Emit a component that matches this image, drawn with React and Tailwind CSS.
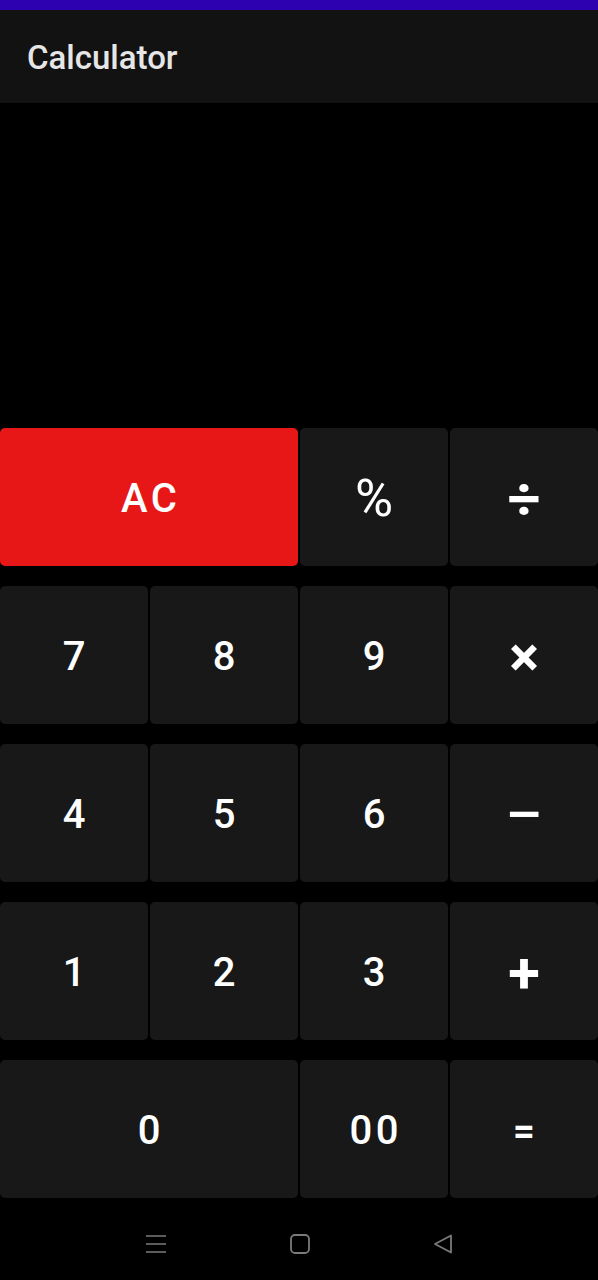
const rows = [
  [
    { label: 'AC', span: 2, red: true },
    { label: '%', size: 'text-[52px]' },
    { label: '÷', size: 'text-[58px] font-bold' },
  ],
  [{ label: '7' }, { label: '8' }, { label: '9' }, { label: '×', size: 'text-[56px] font-bold' }],
  [{ label: '4' }, { label: '5' }, { label: '6' }, { label: '−', size: 'text-[70px] font-normal' }],
  [{ label: '1' }, { label: '2' }, { label: '3' }, { label: '+', size: 'text-[58px] font-bold' }],
  [{ label: '0', span: 2 }, { label: '00' }, { label: '=', size: 'text-[38px] font-bold' }],
];

function Key({ label, span, red, size }) {
  return (
    <button
      className={
        'h-[138px] rounded-[5px] flex items-center justify-center pt-[4px] text-white leading-none ' +
        (size ? size + ' ' : 'text-[40px] font-medium tracking-[0.09em] pl-[0.09em] ') +
        (span === 2 ? 'col-span-2 ' : '') +
        (red ? 'bg-[#e81717]' : 'bg-[#181818]')
      }
    >
      {label}
    </button>
  );
}

export default function App() {
  return (
    <div className="w-[598px] h-[1280px] bg-black flex flex-col font-['Roboto',sans-serif] overflow-hidden">
      {/* status bar */}
      <div className="h-[10px] bg-[#2d00b0]" />

      {/* toolbar */}
      <div className="h-[93px] bg-[#121212] flex items-center px-[27px] pt-[3px]">
        <span className="text-[33px] font-medium text-[#e6e6e6]">Calculator</span>
      </div>

      {/* display */}
      <div className="h-[325px]" />

      {/* keypad */}
      <div className="flex flex-col gap-[20px]">
        {rows.map((row, i) => (
          <div key={i} className="grid grid-cols-4 gap-x-[2px]">
            {row.map((k) => (
              <Key key={k.label} {...k} />
            ))}
          </div>
        ))}
      </div>

      {/* navigation bar */}
      <div className="flex-1 flex items-center justify-center gap-[123px] text-[#7a7a7a] pt-[10px]">
        <svg width="22" height="20" viewBox="0 0 22 20" fill="none" stroke="currentColor" strokeWidth="1.6">
          <path d="M1 2h20M1 10h20M1 18h20" />
        </svg>
        <svg width="20" height="20" viewBox="0 0 20 20" fill="none" stroke="currentColor" strokeWidth="1.8">
          <rect x="1" y="1" width="18" height="18" rx="4" />
        </svg>
        <svg width="20" height="20" viewBox="0 0 20 20" fill="none" stroke="currentColor" strokeWidth="1.8" strokeLinejoin="round">
          <path d="M18 1.5v17L2 10z" />
        </svg>
      </div>
    </div>
  );
}
